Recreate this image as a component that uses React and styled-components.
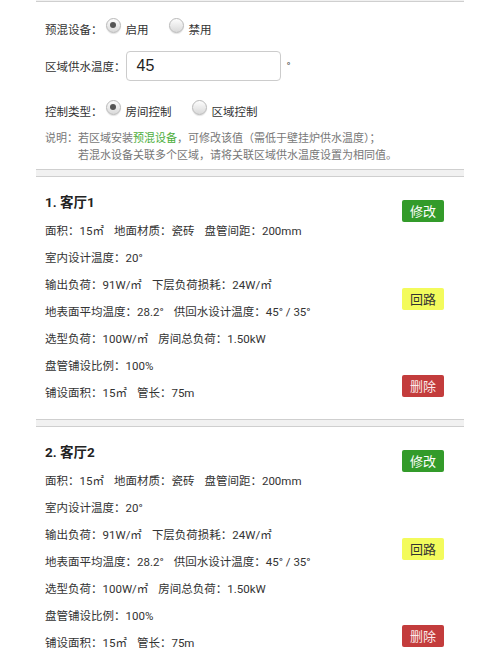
import React from 'react';
import styled, { createGlobalStyle } from 'styled-components';

const GlobalStyle = createGlobalStyle`
  body {
    margin: 0;
    background: #ffffff;
    font-family: Roboto, 'Noto Sans CJK SC', sans-serif;
    color: #333;
  }
`;

const Page = styled.div`
  width: 500px;
  background: #fff;
`;

const Panel = styled.div`
  margin: 0 36px;
`;

const Divider = styled.div`
  height: ${(p) => (p.$short ? '1px' : '6px')};
  background: #f1f1f1;
  border-top: ${(p) => (p.$short ? 'none' : '1px solid #cfcfcf')};
  border-bottom: 1px solid #cfcfcf;
`;

const Settings = styled.section`
  padding: 12px 0 5px 9px;
`;

const FormRow = styled.div`
  display: flex;
  align-items: center;
  height: 30px;
  font-size: 11.5px;
  margin-top: ${(p) => p.$gap || 0}px;
`;

const Label = styled.span`
  white-space: nowrap;
`;

const Option = styled.label`
  display: flex;
  align-items: center;
  margin-left: ${(p) => (p.$first ? '3px' : '20px')};
`;

const Radio = styled.span`
  position: relative;
  width: 13px;
  height: 13px;
  border-radius: 50%;
  border: 1px solid #b9b9b9;
  background: linear-gradient(#fdfdfd, #d9d9d9);
  box-shadow: 0 1px 1px rgba(0, 0, 0, 0.12);
  margin-right: 5px;
  transform: translateY(-4px);

  &::after {
    content: '';
    display: ${(p) => (p.$checked ? 'block' : 'none')};
    position: absolute;
    left: 3.5px;
    top: 3.5px;
    width: 6px;
    height: 6px;
    border-radius: 50%;
    background: #555;
  }
`;

const TempInput = styled.div`
  width: 143px;
  height: 28px;
  border: 1px solid #cccccc;
  border-radius: 4px;
  padding-left: 10px;
  display: flex;
  align-items: center;
  font-family: 'Liberation Sans', Arial, sans-serif;
  font-size: 16px;
  color: #222;
`;

const Degree = styled.span`
  margin-left: 6px;
  font-size: 11px;
  color: #555;
`;

const Note = styled.p`
  margin: 4px 0 0;
  font-size: 11px;
  line-height: 17px;
  color: #777;
  padding-left: 33px;
  text-indent: -33px;
`;

const Highlight = styled.span`
  color: #4cae3c;
`;

const Card = styled.article`
  display: flex;
  justify-content: space-between;
  padding: 13px 20px 12px 9px;
`;

const Info = styled.div`
  display: flex;
  flex-direction: column;
`;

const Title = styled.h3`
  margin: 0 0 4px;
  font-size: 13.5px;
  font-weight: bold;
  line-height: 24px;
  color: #222;
`;

const InfoRow = styled.div`
  font-size: 11.5px;
  line-height: 27px;
  white-space: nowrap;
`;

const Item = styled.span`
  margin-right: 10px;
`;

const Actions = styled.div`
  display: flex;
  flex-direction: column;
  justify-content: space-between;
  padding: 10px 0 10px;
`;

const colors = {
  green: { bg: '#339b2a', fg: '#fff' },
  yellow: { bg: '#f3fb5c', fg: '#333' },
  red: { bg: '#c33c3c', fg: '#fbe9e9' },
};

const ActionButton = styled.button`
  width: 42px;
  height: 22px;
  padding: 0;
  border: none;
  border-radius: 2px;
  background: ${(p) => colors[p.$tone].bg};
  color: ${(p) => colors[p.$tone].fg};
  font-family: 'Noto Sans CJK SC', sans-serif;
  font-size: 13px;
  line-height: 22px;
`;

const rooms = [
  { id: 1, name: '客厅1' },
  { id: 2, name: '客厅2' },
];

const RoomCard = ({ room }) => (
  <Card>
    <Info>
      <Title>{room.id}. {room.name}</Title>
      <InfoRow>
        <Item>面积：15㎡</Item>
        <Item>地面材质：瓷砖</Item>
        <Item>盘管间距：200mm</Item>
      </InfoRow>
      <InfoRow>室内设计温度：20°</InfoRow>
      <InfoRow>
        <Item>输出负荷：91W/㎡</Item>
        <Item>下层负荷损耗：24W/㎡</Item>
      </InfoRow>
      <InfoRow>
        <Item>地表面平均温度：28.2°</Item>
        <Item>供回水设计温度：45° / 35°</Item>
      </InfoRow>
      <InfoRow>
        <Item>选型负荷：100W/㎡</Item>
        <Item>房间总负荷：1.50kW</Item>
      </InfoRow>
      <InfoRow>盘管铺设比例：100%</InfoRow>
      <InfoRow>
        <Item>铺设面积：15㎡</Item>
        <Item>管长：75m</Item>
      </InfoRow>
    </Info>
    <Actions>
      <ActionButton $tone="green">修改</ActionButton>
      <ActionButton $tone="yellow">回路</ActionButton>
      <ActionButton $tone="red">删除</ActionButton>
    </Actions>
  </Card>
);

const App = () => {
  return (
    <Page>
      <GlobalStyle />
      <Panel>
        <Divider $short />
        <Settings>
          <FormRow>
            <Label>预混设备：</Label>
            <Option $first><Radio $checked />启用</Option>
            <Option><Radio />禁用</Option>
          </FormRow>
          <FormRow $gap={7}>
            <Label>区域供水温度：</Label>
            <TempInput>45</TempInput>
            <Degree>°</Degree>
          </FormRow>
          <FormRow $gap={15}>
            <Label>控制类型：</Label>
            <Option $first><Radio $checked />房间控制</Option>
            <Option><Radio />区域控制</Option>
          </FormRow>
          <Note>
            说明：若区域安装<Highlight>预混设备</Highlight>，可修改该值（需低于壁挂炉供水温度）；
            <br />
            若混水设备关联多个区域，请将关联区域供水温度设置为相同值。
          </Note>
        </Settings>
        {rooms.map((room) => (
          <React.Fragment key={room.id}>
            <Divider />
            <RoomCard room={room} />
          </React.Fragment>
        ))}
      </Panel>
    </Page>
  );
};

export default App;
